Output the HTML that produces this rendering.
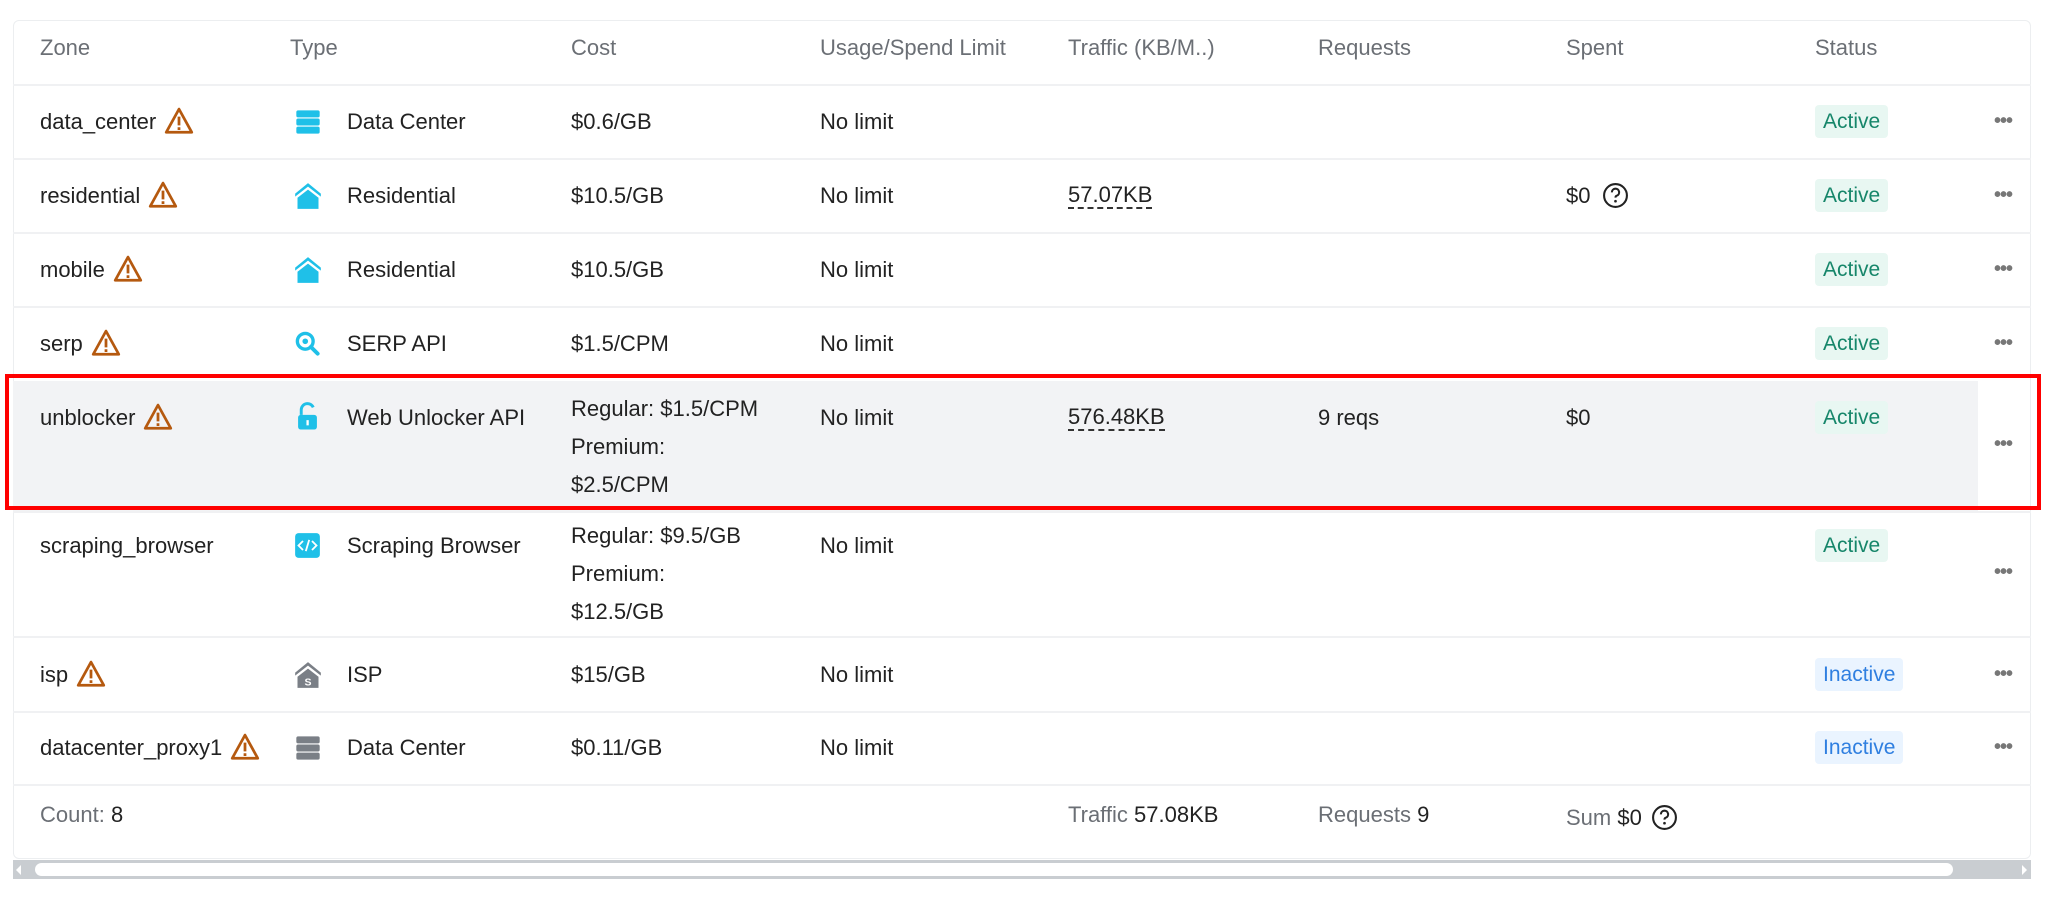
<!DOCTYPE html>
<html><head><meta charset="utf-8"><style>
*{margin:0;padding:0;box-sizing:border-box}
body{width:2048px;height:897px;background:#fff;font-family:"Liberation Sans",sans-serif;color:#222;font-size:22px;position:relative;overflow:hidden}
.t{position:absolute;line-height:30px;white-space:nowrap}
.z{display:flex;align-items:center;height:30px}
.h{color:#6b6f75}
.line{position:absolute;left:13px;width:2018px;height:2px;background:#f0f1f3}
.badge{position:absolute;height:33px;line-height:33px;padding:0 8px;border-radius:4px;font-size:21px}
.act{background:#e8f7f2;color:#16866a}
.ina{background:#eaf4ff;color:#2f7fe0}
.dots{position:absolute;font-size:20px;color:#777;letter-spacing:-1px;font-weight:bold}
.dash{border-bottom:2px dashed #333}
svg{position:absolute}
.wi{position:static;display:block;margin-left:8px;margin-top:-2px}
</style></head><body>
<div style="position:absolute;left:13px;top:20px;width:2018px;height:839px;border:1px solid #eceef0;border-radius:6px"></div>
<div style="position:absolute;left:13px;top:381px;width:1965px;height:131px;background:#f2f3f5"></div>
<div class="line" style="top:84px"></div>
<div class="line" style="top:158px"></div>
<div class="line" style="top:232px"></div>
<div class="line" style="top:306px"></div>
<div class="line" style="top:511px"></div>
<div class="line" style="top:636px"></div>
<div class="line" style="top:711px"></div>
<div class="line" style="top:784px"></div>

<div class="t h" style="left:40px;top:33px">Zone</div>
<div class="t h" style="left:290px;top:33px">Type</div>
<div class="t h" style="left:571px;top:33px">Cost</div>
<div class="t h" style="left:820px;top:33px">Usage/Spend Limit</div>
<div class="t h" style="left:1068px;top:33px">Traffic (KB/M..)</div>
<div class="t h" style="left:1318px;top:33px">Requests</div>
<div class="t h" style="left:1566px;top:33px">Spent</div>
<div class="t h" style="left:1815px;top:33px">Status</div>

<svg width="0" height="0"><defs><symbol id="w" viewBox="0 0 24 24"><path d="M12 2.5L1.8 21h20.4z" fill="none" stroke="#b5590f" stroke-width="2.2" stroke-linejoin="round"/><rect x="10.9" y="8.5" width="2.2" height="7" fill="#b5590f"/><rect x="10.9" y="17" width="2.2" height="2.2" fill="#b5590f"/></symbol>
<symbol id="srv" viewBox="0 0 24 24"><rect x="2" y="2" width="20" height="6" rx="1.5"/><rect x="2" y="9" width="20" height="6" rx="1.5"/><rect x="2" y="16" width="20" height="6" rx="1.5"/></symbol>
<symbol id="home" viewBox="0 0 24 24"><path d="M12 1L1 10v2.5l11-8.5 11 8.5V10z"/><path d="M3 13.5L12 6.5l9 7V23H3z"/></symbol></defs></svg>

<!-- row 1 -->
<div class="t z" style="left:40px;top:107px">data_center<svg class="wi" width="30" height="30"><use href="#w"/></svg></div>
<svg style="left:294px;top:108px;fill:#1fc0e8" width="28" height="28"><use href="#srv"/></svg>
<div class="t" style="left:347px;top:107px">Data Center</div>
<div class="t" style="left:571px;top:107px">$0.6/GB</div>
<div class="t" style="left:820px;top:107px">No limit</div>
<div class="badge act" style="left:1815px;top:105px">Active</div>
<div class="dots" style="left:1994px;top:110px">•••</div>

<!-- row 2 -->
<div class="t z" style="left:40px;top:181px">residential<svg class="wi" width="30" height="30"><use href="#w"/></svg></div>
<svg style="left:294px;top:182px;fill:#1fc0e8" width="28" height="28"><use href="#home"/></svg>
<div class="t" style="left:347px;top:181px">Residential</div>
<div class="t" style="left:571px;top:181px">$10.5/GB</div>
<div class="t" style="left:820px;top:181px">No limit</div>
<div class="t" style="left:1068px;top:181px;line-height:28px"><span class="dash">57.07KB</span></div>
<div class="t" style="left:1566px;top:181px">$0</div>
<svg style="left:1602px;top:182px" width="27" height="27" viewBox="0 0 26 26"><circle cx="13" cy="13" r="11" fill="none" stroke="#222" stroke-width="2"/><path d="M9.5 10a3.5 3.5 0 1 1 4.5 3.3c-.8.3-1 .8-1 1.7" fill="none" stroke="#222" stroke-width="2"/><circle cx="13" cy="18.5" r="1.3" fill="#222"/></svg>
<div class="badge act" style="left:1815px;top:179px">Active</div>
<div class="dots" style="left:1994px;top:184px">•••</div>

<!-- row 3 -->
<div class="t z" style="left:40px;top:255px">mobile<svg class="wi" width="30" height="30"><use href="#w"/></svg></div>
<svg style="left:294px;top:256px;fill:#1fc0e8" width="28" height="28"><use href="#home"/></svg>
<div class="t" style="left:347px;top:255px">Residential</div>
<div class="t" style="left:571px;top:255px">$10.5/GB</div>
<div class="t" style="left:820px;top:255px">No limit</div>
<div class="badge act" style="left:1815px;top:253px">Active</div>
<div class="dots" style="left:1994px;top:258px">•••</div>

<!-- row 4 -->
<div class="t z" style="left:40px;top:329px">serp<svg class="wi" width="30" height="30"><use href="#w"/></svg></div>
<svg style="left:294px;top:330px" width="27" height="27" viewBox="0 0 24 24"><circle cx="10" cy="10" r="7" fill="none" stroke="#1fc0e8" stroke-width="3"/><circle cx="10" cy="10" r="2.5" fill="#1fc0e8"/><path d="M15 15l6 6" stroke="#1fc0e8" stroke-width="3.5" stroke-linecap="round"/></svg>
<div class="t" style="left:347px;top:329px">SERP API</div>
<div class="t" style="left:571px;top:329px">$1.5/CPM</div>
<div class="t" style="left:820px;top:329px">No limit</div>
<div class="badge act" style="left:1815px;top:327px">Active</div>
<div class="dots" style="left:1994px;top:332px">•••</div>

<!-- row 5 unblocker -->
<div class="t z" style="left:40px;top:403px">unblocker<svg class="wi" width="30" height="30"><use href="#w"/></svg></div>
<svg style="left:296px;top:402px" width="23" height="30" viewBox="0 0 22 28"><path d="M5 12V7a6 6 0 0 1 11.5-2.2" fill="none" stroke="#1fc0e8" stroke-width="2.8"/><rect x="2" y="12" width="18" height="14" rx="2.5" fill="#1fc0e8"/><rect x="10" y="17" width="2.2" height="5" fill="#fff"/></svg>
<div class="t" style="left:347px;top:403px">Web Unlocker API</div>
<div class="t" style="left:571px;top:386px;line-height:38px;padding-top:4px">Regular: $1.5/CPM<br>Premium:<br>$2.5/CPM</div>
<div class="t" style="left:820px;top:403px">No limit</div>
<div class="t" style="left:1068px;top:403px;line-height:28px"><span class="dash">576.48KB</span></div>
<div class="t" style="left:1318px;top:403px">9 reqs</div>
<div class="t" style="left:1566px;top:403px">$0</div>
<div class="badge act" style="left:1815px;top:401px">Active</div>
<div class="dots" style="left:1994px;top:433px">•••</div>

<!-- row 6 -->
<div class="t" style="left:40px;top:531px">scraping_browser</div>
<svg style="left:294px;top:532px" width="27" height="27" viewBox="0 0 24 24"><rect x="1" y="1" width="22" height="22" rx="3" fill="#1fc0e8"/><path d="M8 8l-4 4 4 4M16 8l4 4-4 4M13.5 7l-3 10" fill="none" stroke="#fff" stroke-width="1.6"/></svg>
<div class="t" style="left:347px;top:531px">Scraping Browser</div>
<div class="t" style="left:571px;top:513px;line-height:38px;padding-top:4px">Regular: $9.5/GB<br>Premium:<br>$12.5/GB</div>
<div class="t" style="left:820px;top:531px">No limit</div>
<div class="badge act" style="left:1815px;top:529px">Active</div>
<div class="dots" style="left:1994px;top:561px">•••</div>

<!-- row 7 -->
<div class="t z" style="left:40px;top:660px">isp<svg class="wi" width="30" height="30"><use href="#w"/></svg></div>
<svg style="left:294px;top:661px;fill:#7a7f86" width="28" height="28" viewBox="0 0 24 24"><path d="M12 1L1 10v2.5l11-8.5 11 8.5V10z"/><path d="M3 13.5L12 6.5l9 7V23H3z"/><text x="12" y="21" font-size="9" fill="#fff" text-anchor="middle" font-family="Liberation Sans" font-weight="bold">S</text></svg>
<div class="t" style="left:347px;top:660px">ISP</div>
<div class="t" style="left:571px;top:660px">$15/GB</div>
<div class="t" style="left:820px;top:660px">No limit</div>
<div class="badge ina" style="left:1815px;top:658px">Inactive</div>
<div class="dots" style="left:1994px;top:663px">•••</div>

<!-- row 8 -->
<div class="t z" style="left:40px;top:733px">datacenter_proxy1<svg class="wi" width="30" height="30"><use href="#w"/></svg></div>
<svg style="left:294px;top:734px;fill:#7a7f86" width="28" height="28"><use href="#srv"/></svg>
<div class="t" style="left:347px;top:733px">Data Center</div>
<div class="t" style="left:571px;top:733px">$0.11/GB</div>
<div class="t" style="left:820px;top:733px">No limit</div>
<div class="badge ina" style="left:1815px;top:731px">Inactive</div>
<div class="dots" style="left:1994px;top:736px">•••</div>

<!-- footer -->
<div class="t h" style="left:40px;top:800px">Count: <span style="color:#222">8</span></div>
<div class="t h" style="left:1068px;top:800px">Traffic <span style="color:#222">57.08KB</span></div>
<div class="t h" style="left:1318px;top:800px">Requests <span style="color:#222">9</span></div>
<div class="t h" style="left:1566px;top:803px">Sum <span style="color:#222">$0</span></div>
<svg style="left:1651px;top:804px" width="27" height="27" viewBox="0 0 26 26"><circle cx="13" cy="13" r="11" fill="none" stroke="#222" stroke-width="2"/><path d="M9.5 10a3.5 3.5 0 1 1 4.5 3.3c-.8.3-1 .8-1 1.7" fill="none" stroke="#222" stroke-width="2"/><circle cx="13" cy="18.5" r="1.3" fill="#222"/></svg>

<!-- scrollbar -->
<div style="position:absolute;left:13px;top:860px;width:2018px;height:19px;background:#c9cdd1"></div>
<div style="position:absolute;left:35px;top:863px;width:1918px;height:13px;background:#fff;border-radius:7px"></div>
<div style="position:absolute;left:16px;top:865px;width:0;height:0;border-top:5px solid transparent;border-bottom:5px solid transparent;border-right:5px solid #fff"></div>
<div style="position:absolute;left:2022px;top:865px;width:0;height:0;border-top:5px solid transparent;border-bottom:5px solid transparent;border-left:5px solid #fff"></div>

<!-- red box -->
<div style="position:absolute;left:5px;top:374px;width:2036px;height:136px;border:4px solid #f00"></div>
</body></html>
